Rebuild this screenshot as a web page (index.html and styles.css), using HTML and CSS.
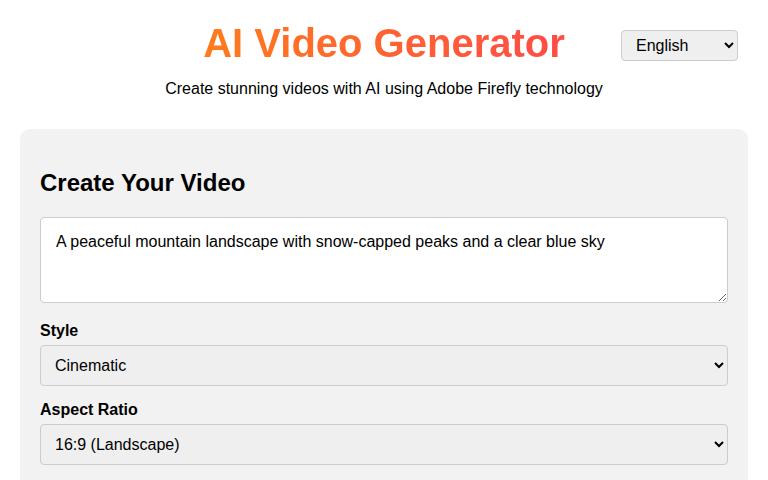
FILE: index.html
```html
<!DOCTYPE html>
<html lang="en">
<head>
<meta charset="utf-8">
<title>AI Video Generator</title>
<link rel="stylesheet" href="styles.css">
</head>
<body>
<div class="container">
  <header class="header">
    <h1 class="title">AI Video Generator</h1>
    <p class="subtitle">Create stunning videos with AI using Adobe Firefly technology</p>
    <select class="lang">
      <option>English</option>
      <option>Español</option>
      <option>Français</option>
    </select>
  </header>
  <main class="card">
    <h2 class="card-title">Create Your Video</h2>
    <textarea class="prompt">A peaceful mountain landscape with snow-capped peaks and a clear blue sky</textarea>
    <div class="field">
      <label class="label">Style</label>
      <select class="input">
        <option>Cinematic</option>
        <option>Anime</option>
        <option>Realistic</option>
      </select>
    </div>
    <div class="field">
      <label class="label">Aspect Ratio</label>
      <select class="input">
        <option>16:9 (Landscape)</option>
        <option>9:16 (Portrait)</option>
        <option>1:1 (Square)</option>
      </select>
    </div>
  </main>
</div>
</body>
</html>
```

FILE: styles.css
```css
* { box-sizing: border-box; }
html, body { margin: 0; padding: 0; background: #fff; }
body {
  font-family: "Liberation Sans", Arial, sans-serif;
  color: #000;
}
.container {
  padding: 20px;
}
.header {
  position: relative;
  text-align: center;
  margin-bottom: 31px;
}
.title {
  margin: 0 0 14px;
  font-size: 40px;
  font-weight: bold;
  line-height: 46px;
  display: inline-block;
  background: linear-gradient(90deg, #ff7b1c, #ff4b47);
  -webkit-background-clip: text;
  background-clip: text;
  color: transparent;
}
.subtitle {
  margin: 0;
  font-size: 16px;
  line-height: 18px;
}
.lang {
  position: absolute;
  top: 10px;
  right: 10px;
  width: 117px;
  height: 31px;
  padding: 5px 10px;
  font-family: "Liberation Sans", Arial, sans-serif;
  font-size: 16px;
  background: #efefef;
  border: 1px solid #ccc;
  border-radius: 4px;
  color: #000;
}
.card {
  background: #f2f2f2;
  border-radius: 10px;
  padding: 20px 20px 30px;
  display: flex;
  flex-direction: column;
}
.card-title {
  margin: 20px 0 20px;
  font-size: 24px;
  line-height: 28px;
  font-weight: bold;
}
.prompt {
  display: block;
  width: 100%;
  height: 86px;
  padding: 15px;
  font-family: "Liberation Sans", Arial, sans-serif;
  font-size: 16px;
  line-height: 18px;
  border: 1px solid #ccc;
  border-radius: 4px;
  background: #fff;
  color: #000;
  margin-bottom: 18px;
}
.field {
  display: flex;
  flex-direction: column;
  gap: 4px;
  margin-bottom: 14px;
}
.label {
  font-size: 16px;
  line-height: 20px;
  font-weight: bold;
}
.input {
  width: 100%;
  height: 41px;
  padding: 10px;
  font-family: "Liberation Sans", Arial, sans-serif;
  font-size: 16px;
  background: #efefef;
  border: 1px solid #ccc;
  border-radius: 4px;
  color: #000;
}
```
